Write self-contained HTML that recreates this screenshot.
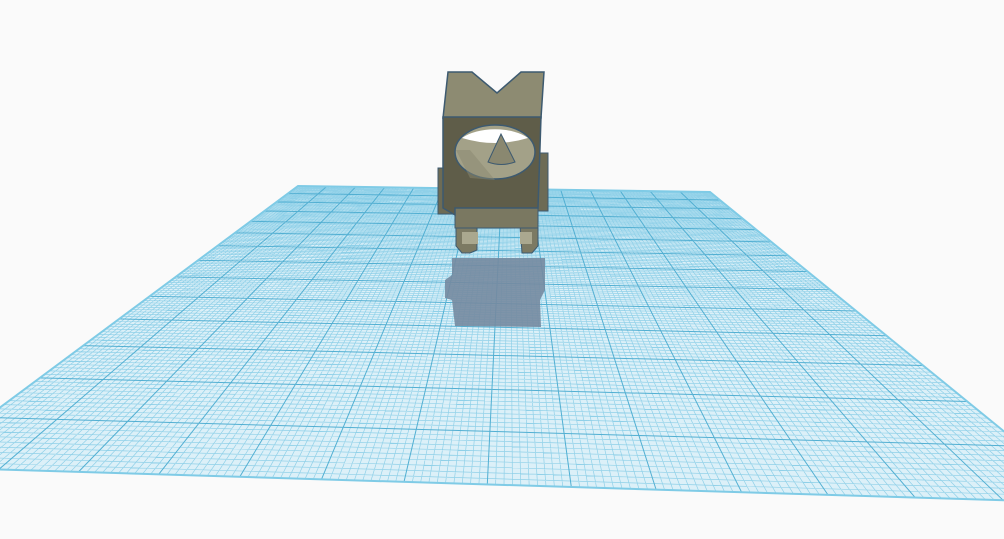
<!DOCTYPE html>
<html><head><style>
html,body{margin:0;padding:0;background:#fafafa;width:1004px;height:539px;overflow:hidden}
svg{display:block}
</style></head><body>
<svg id="s" width="1004" height="539" viewBox="0 0 1004 539" xmlns="http://www.w3.org/2000/svg">
<rect width="1004" height="539" fill="#fafafa"/>
<polygon points="298,186 710,192 1092,503 -80,467" fill="#dcf0f8"/>
<g id="minor" stroke="#8fd0e8" stroke-width="0.7" fill="none"></g>
<g id="major" stroke="#52afd2" stroke-width="1" fill="none"></g>
<polygon points="298,186 710,192 1092,503 -80,467" fill="none" stroke="#7fcbe6" stroke-width="2"/>
<!-- shadow -->
<path d="M452,258 L545,258 L545,290 L540,300 L541,327 L455,326 L452,300 L445,298 L445,280 L452,275 Z" fill="#7489a0" opacity="0.9"/>
<!-- side blocks -->
<rect x="438" y="168" width="18" height="46" fill="#6d6b55" stroke="#3d5a70" stroke-width="1"/>
<rect x="538" y="153" width="10" height="58" fill="#6d6b55" stroke="#3d5a70" stroke-width="1"/>
<!-- legs -->
<path d="M456,226 L477,226 L477,250 L470,253 L462,253 L456,246 Z" fill="#7c7a63" stroke="#3d5a70" stroke-width="1"/>
<path d="M520,226 L538,226 L538,246 L532,253 L522,253 Z" fill="#7c7a63" stroke="#3d5a70" stroke-width="1"/>
<rect x="462" y="232" width="16" height="12" fill="#aaa88f"/>
<rect x="520" y="232" width="12" height="12" fill="#aaa88f"/>
<!-- lower band -->
<path d="M455,207 L538,207 L538,228 L455,228 Z" fill="#7a7861" stroke="#3d5a70" stroke-width="1"/>
<!-- top -->
<path d="M448,72 L472,72 L497,93 L521,72 L544,72 L541,118 L443,118 Z" fill="#8d8b72" stroke="#3d5a70" stroke-width="1.5"/>
<!-- front face -->
<path d="M443,117 L541,117 L538,208 L455,208 L455,215 L443,208 Z" fill="#5f5d49" stroke="#3d5a70" stroke-width="1.5"/>
<!-- hole -->
<ellipse cx="495" cy="152" rx="40" ry="27" fill="#a3a188" stroke="#3d5a70" stroke-width="1.5"/>
<path d="M462,138 A40,20 0 0 1 528,138 Q495,148 462,138 Z" fill="#ffffff"/>
<path d="M456,150 L470,178 L495,180 L470,150 Z" fill="#8a8870" opacity="0.5"/>
<path d="M501,134 L488,162 Q501,167 515,162 Z" fill="#8a8870" stroke="#3d5a70" stroke-width="1"/>
</svg>
<script>
(function(){
var src=[[0,0],[1,0],[1,1],[0,1]],dst=[[298,186],[710,192],[1092,503],[-80,467]];
var A=[],b=[];
for(var i=0;i<4;i++){var x=src[i][0],y=src[i][1],u=dst[i][0],v=dst[i][1];
A.push([x,y,1,0,0,0,-u*x,-u*y]);b.push(u);
A.push([0,0,0,x,y,1,-v*x,-v*y]);b.push(v);}
var n=8;for(var c=0;c<n;c++){var p=c;for(var r=c+1;r<n;r++)if(Math.abs(A[r][c])>Math.abs(A[p][c]))p=r;
var t=A[c];A[c]=A[p];A[p]=t;t=b[c];b[c]=b[p];b[p]=t;
for(var r=0;r<n;r++){if(r==c)continue;var f=A[r][c]/A[c][c];for(var k=c;k<n;k++)A[r][k]-=f*A[c][k];b[r]-=f*b[c];}}
var h=[];for(var i=0;i<n;i++)h.push(b[i]/A[i][i]);
function P(x,y){var w=h[6]*x+h[7]*y+1;return [(h[0]*x+h[1]*y+h[2])/w,(h[3]*x+h[4]*y+h[5])/w];}
var N=140,mi='',ma='';
for(var i=0;i<=N;i++){var s=i/N;
var a=P(s,0),bb=P(s,1),c2=P(0,s),d=P(1,s);
var seg='M'+a[0].toFixed(1)+','+a[1].toFixed(1)+'L'+bb[0].toFixed(1)+','+bb[1].toFixed(1)+'M'+c2[0].toFixed(1)+','+c2[1].toFixed(1)+'L'+d[0].toFixed(1)+','+d[1].toFixed(1);
if(i%10==0)ma+=seg;else mi+=seg;}
var ns='http://www.w3.org/2000/svg';
var p1=document.createElementNS(ns,'path');p1.setAttribute('d',mi);document.getElementById('minor').appendChild(p1);
var p2=document.createElementNS(ns,'path');p2.setAttribute('d',ma);document.getElementById('major').appendChild(p2);
})();
</script>
</body></html>
